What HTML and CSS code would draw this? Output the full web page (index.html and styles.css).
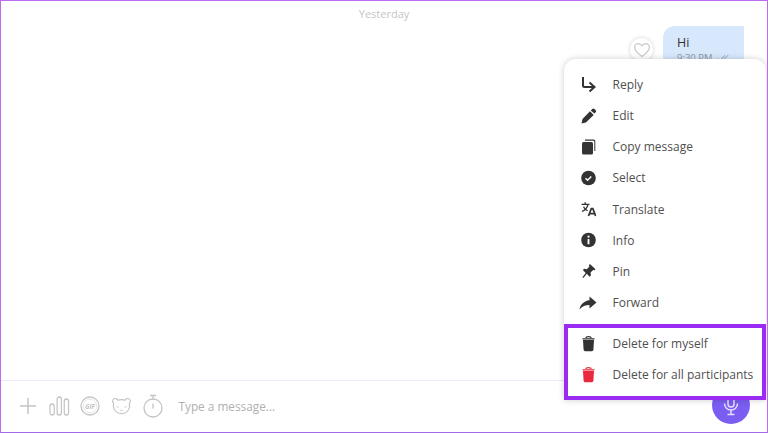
FILE: index.html
```html
<!DOCTYPE html>
<html lang="en">
<head>
    <meta charset="UTF-8">
    <meta name="viewport" content="width=device-width, initial-scale=1.0">
    <title>Chat</title>
    <link rel="stylesheet" href="styles.css">
</head>
<body>

<div class="window">
    <div class="chat">
        <div class="day-label">Yesterday</div>
        <div class="message-row">
            <div class="like">
                <svg width="18" height="16" viewBox="0 0 18 16"><path d="M9 14.600C4.500 11 1.600 8.600 1.600 5.400 1.600 3.200 3.300 1.600 5.300 1.600c1.500 0 2.900.8 3.700 2.200.8-1.400 2.200-2.200 3.700-2.200 2 0 3.700 1.600 3.700 3.800 0 3.200-2.900 5.600-7.400 9.200z" fill="none" stroke="#c9c9c9" stroke-width="1.300"/></svg>
            </div>
            <div class="bubble">
                <div class="bubble-text">Hi</div>
                <div class="bubble-meta">
                    <span>9:30 PM</span>
                    <svg width="17" height="10" viewBox="0 0 17 10"><path d="M1 5.500 4 8.500 10 1.500M6.500 8 7 8.500 14 1.500" fill="none" stroke="#8a97a5" stroke-width="1.100"/></svg>
                </div>
            </div>
        </div>
    </div>

    <div class="composer">
        <div class="tools">
            <svg class="tool" width="16" height="16" viewBox="0 0 16 16"><path d="M8 0v16M0 8h16" stroke="#c4c4c4" stroke-width="1.500" fill="none"/></svg>
            <svg class="tool bars-icon" width="21" height="20" viewBox="0 0 22 20" preserveAspectRatio="none"><g fill="none" stroke="#c4c4c4" stroke-width="1.300"><rect x="1" y="8" width="4.500" height="11" rx="2.250"/><rect x="8.500" y="1" width="4.500" height="18" rx="2.250"/><rect x="16" y="3" width="4.500" height="16" rx="2.250"/></g></svg>
            <svg class="tool" width="20" height="20" viewBox="0 0 20 20"><circle cx="10" cy="10" r="9" fill="none" stroke="#c4c4c4" stroke-width="1.300"/><circle cx="10" cy="10" r="6.800" fill="none" stroke="#d8d8d8" stroke-width=".6"/><text x="10" y="12.500" class="gif-text">GIF</text></svg>
            <svg class="tool" width="21" height="18" viewBox="0 0 22 20"><path d="M2 2.500C4 1 6 1.800 7 3.500c2.500-.8 5.500-.8 8 0 1-1.700 3-2.500 5-1 1.200 1.500.8 3.500-.3 4.800.3 1 .3 2 .3 3 0 5-4.500 8.200-9 8.200s-9-3.200-9-8.200c0-1 0-2 .3-3C1.200 6 .8 4 2 2.500z" fill="none" stroke="#c4c4c4" stroke-width="1.300"/><path d="M5.500 10.500l2 1M16.500 10.500l-2 1M9.500 14.500l1.500 1 1.500-1" fill="none" stroke="#c4c4c4" stroke-width="1.100"/></svg>
            <svg class="tool" width="20" height="24" viewBox="0 0 20 24"><g fill="none" stroke="#c4c4c4" stroke-width="1.300"><circle cx="10" cy="14" r="9"/><path d="M7 1.500h6M10 1.500v3.500M10 9.500v5"/></g></svg>
        </div>
        <div class="placeholder">Type a message...</div>
    </div>

    <button class="mic">
        <svg width="18" height="22" viewBox="0 0 18 22"><g fill="none" stroke="#e6e0ff" stroke-width="1.500"><rect x="6" y="1" width="6" height="12" rx="3"/><path d="M2.500 9.500c0 4 3 6.500 6.500 6.500s6.500-2.500 6.500-6.500M9 16v4M5.500 20.500h7"/></g></svg>
    </button>

    <div class="menu">
        <div class="menu-item">
            <svg class="menu-icon" width="15" height="16" viewBox="0 0 15 16"><path d="M2 0v8.500A1.500 1.500 0 0 0 3.500 10H13M8.500 5.500 13.500 10l-5 4.500" fill="none" stroke="#333" stroke-width="2"/></svg>
            <span>Reply</span>
        </div>
        <div class="menu-item">
            <svg class="menu-icon" width="15" height="16" viewBox="0 0 15 16"><path d="M.5 15.500l1-4.500 7.500-7.800 3.700 3.700-7.800 7.500zM9.800 2.400l1.200-1.200c.8-.8 1.800-.8 2.500-.1l1 1c.7.700.7 1.700-.1 2.500l-1 1z" fill="#333"/></svg>
            <span>Edit</span>
        </div>
        <div class="menu-item">
            <svg class="menu-icon" width="15" height="16" viewBox="0 0 15 16"><path d="M4 .5h8.500A1.800 1.800 0 0 1 14.300 2.300V12h-1V2.800a1 1 0 0 0-1-1H4z" fill="#333"/><rect x="1" y="3" width="11" height="12.500" rx="1.500" fill="#333"/></svg>
            <span>Copy message</span>
        </div>
        <div class="menu-item">
            <svg class="menu-icon" width="15" height="16" viewBox="0 0 16 16"><circle cx="8" cy="8" r="7.800" fill="#333"/><path d="M4.800 8.200 7 10.300l4-4" fill="none" stroke="#fff" stroke-width="1.500"/></svg>
            <span>Select</span>
        </div>
        <div class="menu-item">
            <svg class="menu-icon" width="15" height="16" viewBox="0 0 16 16"><path d="M.5 3h8.500M4.500 .8V3M7.500 3c-.7 3.300-3 6-6.300 7.500M2.700 5.500c1 2.200 2.500 3.600 4.300 4.300" fill="none" stroke="#333" stroke-width="1.400"/><path d="M8 15.500l3-8h1.600l3 8M9.300 13h5" fill="none" stroke="#333" stroke-width="1.900"/></svg>
            <span>Translate</span>
        </div>
        <div class="menu-item">
            <svg class="menu-icon" width="15" height="16" viewBox="0 0 16 16"><circle cx="8" cy="8" r="7.800" fill="#333"/><rect x="7" y="7" width="2" height="5.500" fill="#fff"/><circle cx="8" cy="4.500" r="1.200" fill="#fff"/></svg>
            <span>Info</span>
        </div>
        <div class="menu-item">
            <svg class="menu-icon" width="15" height="16" viewBox="0 0 16 16"><path d="M9.500.5l6 5.500-1.200 1.200-1.300-.3-2.800 2.800.4 3-1.500 1.300-2.900-3.200L2.500 15.500l-1-.8L5 10 2 7l1.200-1.300 3 .3 2.800-2.800-.6-1.400z" fill="#333"/></svg>
            <span>Pin</span>
        </div>
        <div class="menu-item">
            <svg class="menu-icon forward-icon" width="18" height="16" viewBox="0 0 18 16"><path d="M10.500 1.500 17.500 7.500l-7 6V10C6.500 10 3 11.300.5 14.500 1.300 9.500 5 5.800 10.500 5.200z" fill="#333"/></svg>
            <span>Forward</span>
        </div>
        <div class="menu-danger">
            <div class="menu-item">
                <svg class="menu-icon" width="15" height="16" viewBox="0 0 15 16"><path d="M5 2c0-.8.9-1.300 2.500-1.300S10 1.200 10 2M1.500 2.800h12" fill="none" stroke="#333" stroke-width="1.200"/><path d="M2 4h11l-.6 9.800a1.500 1.500 0 0 1-1.500 1.400H4.100a1.500 1.500 0 0 1-1.500-1.400z" fill="#333"/></svg>
                <span>Delete for myself</span>
            </div>
            <div class="menu-item">
                <svg class="menu-icon" width="15" height="16" viewBox="0 0 15 16"><path d="M5 2c0-.8.9-1.300 2.500-1.300S10 1.200 10 2M1.500 2.800h12" fill="none" stroke="#e8293f" stroke-width="1.200"/><path d="M2 4h11l-.6 9.800a1.500 1.500 0 0 1-1.500 1.400H4.100a1.500 1.500 0 0 1-1.500-1.400z" fill="#e8293f"/></svg>
                <span>Delete for all participants</span>
            </div>
        </div>
    </div>
</div>

</body>
</html>
```

FILE: styles.css
```css
* {
    box-sizing: border-box;
}

body {
    font-family: 'Open Sans', 'Noto Sans', sans-serif;
    margin: 0;
    padding: 0;
    background-color: #fff;
    overflow: hidden;
}

.window {
    position: relative;
    display: flex;
    flex-direction: column;
    width: 768px;
    height: 433px;
    background-color: #fff;
    border: 1.500px solid #bd6cf0;
    border-bottom-color: #a06ae8;
    overflow: hidden;
}

.chat {
    flex: 1;
    display: flex;
    flex-direction: column;
    min-height: 0;
}

.day-label {
    margin-top: 4px;
    text-align: center;
    font-size: 11px;
    line-height: 17px;
    color: #c4c6ca;
}

.message-row {
    display: flex;
    justify-content: flex-end;
    align-items: flex-start;
    gap: 10px;
    margin-top: 4px;
    padding-right: 23px;
}

.like {
    display: flex;
    align-items: center;
    justify-content: center;
    width: 23px;
    height: 23px;
    margin-top: 12px;
    border-radius: 50%;
    background-color: #fff;
    box-shadow: 0 0 4px rgba(0, 0, 0, 0.18);
}

.bubble {
    width: 81px;
    height: 50px;
    padding: 8px 14px;
    background-color: #d7e8fd;
    border-radius: 12px 0 0 0;
}

.bubble-text {
    font-size: 12.500px;
    line-height: 17px;
    color: #333;
}

.bubble-meta {
    display: flex;
    align-items: center;
    gap: 4px;
    font-size: 9.500px;
    line-height: 14px;
    color: #8a97a5;
    white-space: nowrap;
}

.composer {
    display: flex;
    align-items: center;
    height: 52px;
    padding: 0 0 2px 18.500px;
    border-top: 1px solid #eeeaf8;
}

.tools {
    display: flex;
    align-items: center;
    gap: 11px;
}

.bars-icon {
    margin-left: 2px;
    margin-right: -1px;
}

.gif-text {
    font-family: 'Open Sans', sans-serif;
    font-size: 6.500px;
    font-weight: 700;
    font-style: italic;
    text-anchor: middle;
    fill: #c4c4c4;
}

.placeholder {
    margin-left: 16px;
    font-size: 11.800px;
    color: #b0b0b0;
}

.mic {
    position: absolute;
    left: 711px;
    top: 385px;
    display: flex;
    align-items: center;
    justify-content: center;
    width: 38px;
    height: 38px;
    padding: 0;
    border: none;
    border-radius: 50%;
    background-color: #7b5df2;
}

.menu {
    position: absolute;
    left: 562.500px;
    top: 57.500px;
    width: 202px;
    padding-top: 10.500px;
    background-color: #fff;
    border-radius: 12px 12px 0 0;
    box-shadow: 0 0 6px rgba(0, 0, 0, 0.2);
}

.menu-item {
    display: flex;
    align-items: center;
    height: 31.150px;
    padding-left: 17px;
    font-size: 12px;
    color: #4f4f4f;
    white-space: nowrap;
}

.menu-icon {
    flex: none;
    margin-right: 17px;
}

.forward-icon {
    margin-left: -1.500px;
    margin-right: 15.500px;
}

.menu-danger {
    margin-top: 6px;
    padding-bottom: 6px;
    border: 4px solid #9a2bf2;
    background-color: #fff;
}

.menu-danger .menu-item {
    padding-left: 13px;
}
```
